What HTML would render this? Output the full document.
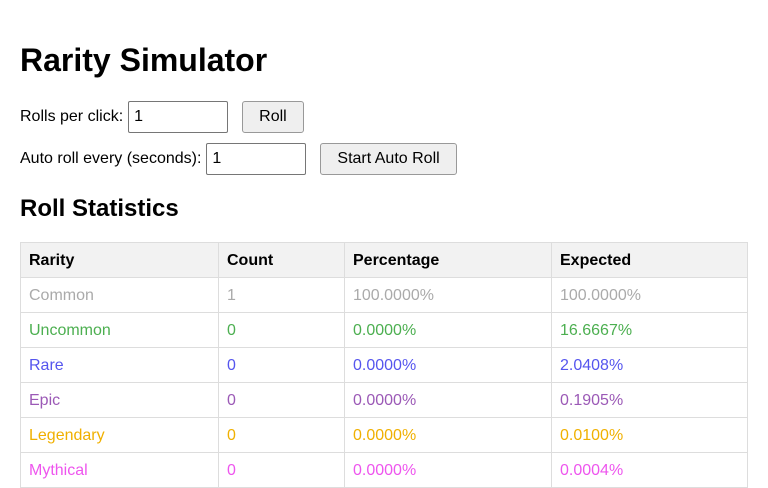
<!DOCTYPE html>
<html><head><style>
body{margin:0;padding:0 20px;font-family:"Liberation Sans",sans-serif;font-size:16px;color:#000;background:#fff}
h1{font-size:32px;margin:0;position:absolute;top:41px;left:20px;line-height:38px}
.row{position:absolute;left:20px;display:flex;align-items:center;height:32px;padding-top:1px}
input{font:16px "Liberation Sans",sans-serif;width:100px;height:32px;box-sizing:border-box;border:1px solid #767676;border-radius:2px;padding:0 5px;margin-left:5px;margin-top:-1px}
button{font:16px "Liberation Sans",sans-serif;height:32px;border:1px solid #999;border-radius:3px;background:#efefef;margin-left:14px;padding:0 16px;margin-top:-1px}
h2{font-size:24px;margin:0;position:absolute;top:194px;left:20px;line-height:30px}
table{position:absolute;top:242px;left:20px;width:728px;border-collapse:collapse}
td,th{border:1px solid #ddd;height:35px;padding:2px 8px 0;text-align:left;box-sizing:border-box}
th{background:#f2f2f2;font-weight:bold}
</style></head><body>
<h1>Rarity Simulator</h1>
<div class="row" style="top:100px">Rolls per click: <input value="1"><button>Roll</button></div>
<div class="row" style="top:142px">Auto roll every (seconds): <input value="1"><button>Start Auto Roll</button></div>
<h2>Roll Statistics</h2>
<table>
<tr><th style="width:198px">Rarity</th><th style="width:126px">Count</th><th style="width:207px">Percentage</th><th>Expected</th></tr>
<tr style="color:#aaa"><td>Common</td><td>1</td><td>100.0000%</td><td>100.0000%</td></tr>
<tr style="color:#4caf50"><td>Uncommon</td><td>0</td><td>0.0000%</td><td>16.6667%</td></tr>
<tr style="color:#5555ee"><td>Rare</td><td>0</td><td>0.0000%</td><td>2.0408%</td></tr>
<tr style="color:#9b59b6"><td>Epic</td><td>0</td><td>0.0000%</td><td>0.1905%</td></tr>
<tr style="color:#f0b000"><td>Legendary</td><td>0</td><td>0.0000%</td><td>0.0100%</td></tr>
<tr style="color:#ee55ee"><td>Mythical</td><td>0</td><td>0.0000%</td><td>0.0004%</td></tr>
</table>
</body></html>
